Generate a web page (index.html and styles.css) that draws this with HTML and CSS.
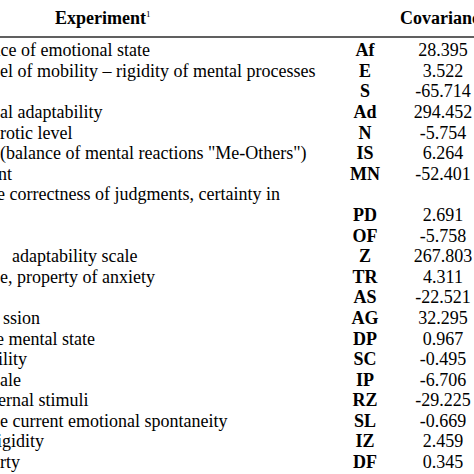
FILE: index.html
```html
<!DOCTYPE html>
<html>
<head>
<meta charset="utf-8">
<link rel="stylesheet" href="styles.css">
</head>
<body>
<div class="table">
  <div class="head">
    <div class="exp">Experiment<sup class="fn">1</sup></div>
    <div></div>
    <div class="cov">Covariance</div>
  </div>
  <div class="rows">
    <div class="row"><div class="txt c9">nce of emotional state</div><div class="code">Af</div><div class="val">28.395</div></div>
    <div class="row"><div class="txt">el of mobility – rigidity of mental processes</div><div class="code">E</div><div class="val">3.522</div></div>
    <div class="row"><div class="txt"></div><div class="code">S</div><div class="val">-65.714</div></div>
    <div class="row"><div class="txt">al adaptability</div><div class="code">Ad</div><div class="val">294.452</div></div>
    <div class="row"><div class="txt">rotic level</div><div class="code">N</div><div class="val">-5.754</div></div>
    <div class="row"><div class="txt">(balance of mental reactions "Me-Others")</div><div class="code">IS</div><div class="val">6.264</div></div>
    <div class="row"><div class="txt c2">nt</div><div class="code">MN</div><div class="val">-52.401</div></div>
    <div class="row"><div class="txt c3">e correctness of judgments, certainty in</div><div class="code"></div><div class="val"></div></div>
    <div class="row"><div class="txt"></div><div class="code">PD</div><div class="val">2.691</div></div>
    <div class="row"><div class="txt"></div><div class="code">OF</div><div class="val">-5.758</div></div>
    <div class="row"><div class="txt in12">adaptability scale</div><div class="code">Z</div><div class="val">267.803</div></div>
    <div class="row"><div class="txt">e, property of anxiety</div><div class="code">TR</div><div class="val">4.311</div></div>
    <div class="row"><div class="txt"></div><div class="code">AS</div><div class="val">-22.521</div></div>
    <div class="row"><div class="txt in3">ssion</div><div class="code">AG</div><div class="val">32.295</div></div>
    <div class="row"><div class="txt c4">e mental state</div><div class="code">DP</div><div class="val">0.967</div></div>
    <div class="row"><div class="txt c2">ility</div><div class="code">SC</div><div class="val">-0.495</div></div>
    <div class="row"><div class="txt">ale</div><div class="code">IP</div><div class="val">-6.706</div></div>
    <div class="row"><div class="txt c2">ernal stimuli</div><div class="code">RZ</div><div class="val">-29.225</div></div>
    <div class="row"><div class="txt">e current emotional spontaneity</div><div class="code">SL</div><div class="val">-0.669</div></div>
    <div class="row"><div class="txt c3">igidity</div><div class="code">IZ</div><div class="val">2.459</div></div>
    <div class="row"><div class="txt">rty</div><div class="code">DF</div><div class="val">0.345</div></div>
  </div>
</div>
</body>
</html>
```
FILE: styles.css
```css
html, body {
  margin: 0;
  padding: 0;
  background: #ffffff;
  overflow: hidden;
}
body {
  font-family: "Liberation Serif", "Times New Roman", serif;
  color: #000000;
}
.table {
  width: 486px;
}
.head {
  display: grid;
  grid-template-columns: 330px 70px 86px;
  align-items: center;
  height: 36px;
  border-bottom: 2px solid #606060;
  font-weight: bold;
  font-size: 18px;
  line-height: 20px;
  white-space: nowrap;
}
.exp {
  padding-left: 55px;
}
.fn {
  font-size: 9px;
  line-height: 0;
  vertical-align: 7px;
  font-weight: normal;
}
.cov {
  text-align: center;
}
.rows {
  padding-top: 2.2px;
}
.row {
  display: grid;
  grid-template-columns: 330px 70px 86px;
  height: 20.6px;
  line-height: 20.6px;
  font-size: 18px;
  white-space: nowrap;
}
.code {
  text-align: center;
  font-weight: bold;
}
.val {
  text-align: center;
}
.c9 { text-indent: -8.5px; }
.c2 { text-indent: -2px; }
.c3 { text-indent: -3px; }
.c4 { text-indent: -4px; }
.in12 { text-indent: 12px; }
.in3 { text-indent: 3px; }
```
